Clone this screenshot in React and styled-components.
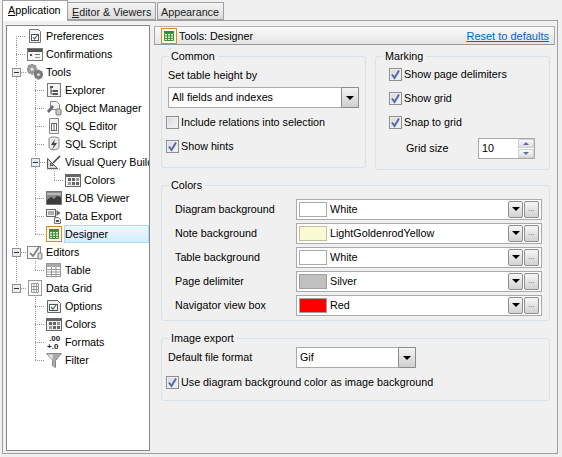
import React from 'react';
import styled, { createGlobalStyle } from 'styled-components';

const Global = createGlobalStyle`
  html, body { margin: 0; padding: 0; background: #f0f0f0; }
  body { font: 10.75px/13px "Liberation Sans", "Noto Sans", sans-serif; color: #000; }
  * { box-sizing: border-box; }
`;

const Window = styled.div`
  width: 562px; height: 457px; background: #f0f0f0; display: flex; flex-direction: column; overflow: hidden;
`;
const TabBar = styled.div`
  height: 20px; display: flex; align-items: flex-end; padding-left: 2px; position: relative; z-index: 1;
`;
const Tab = styled.div`
  height: ${p => (p.$active ? 21 : 18)}px;
  margin-bottom: ${p => (p.$active ? -1 : 0)}px;
  margin-right: ${p => (p.$gap ? 1 : 0)}px;
  width: ${p => p.$w}px;
  border: 1px solid #a0a0a0;
  border-left-width: ${p => (p.$noLeft ? 0 : 1)}px;
  border-bottom: ${p => (p.$active ? 'none' : '1px solid #a0a0a0')};
  background: ${p => (p.$active ? '#fff' : 'linear-gradient(#f4f4f4, #dcdcdc)')};
  padding-left: ${p => p.$pl}px;
  padding-top: 3px;
  white-space: nowrap;
  color: ${p => (p.$active ? '#000' : '#222')};
`;
const Body = styled.div`
  margin: 0 4px 3px 2px; flex: 1; border: 1px solid #a0a0a0; background: #f0f0f0;
  display: grid; grid-template-columns: 144px 1fr; column-gap: 4px; padding: 4px 3px 2px 3px;
`;
const Tree = styled.div`
  border: 1px solid #828790; background: #fff; overflow: hidden; padding-top: 1px;
`;
const TreeRow = styled.div`
  height: 18px; display: flex; align-items: center; white-space: nowrap; overflow: hidden;
`;
const GuideBox = styled.svg`
  width: 19px; height: 18px; flex: none; display: block;
`;
const IconSlot = styled.span`
  width: 16px; height: 16px; margin-left: 1px; flex: none; display: block;
  svg { display: block; }
`;
const Label = styled.span`
  margin-left: 3px;
  color: #000;
  ${p => p.$sel && `
    margin-left: 2px; height: 18px; line-height: 16px; flex: 1;
    border: 1px solid #a9dcf7; background: linear-gradient(#f0f9fe, #d3edfb);
  `}
`;

const Right = styled.div`
  display: flex; flex-direction: column; padding-top: 1px;
`;
const Header = styled.div`
  height: 19px; border: 1px solid #a8a8a8; border-color: #b4b4b4 #a8a8a8 #999 #a8a8a8;
  background: linear-gradient(#fbfbfb, #e4e4e4);
  display: flex; align-items: center; padding: 1px 5px 0 5px; gap: 2px;
`;
const ResetLink = styled.a`
  margin-left: auto; color: #0066cc; text-decoration: underline; font-size: 11px;
`;
const Content = styled.div`
  padding: 5px 5px 0 7px; display: flex; flex-direction: column;
`;
const TopGrid = styled.div`
  display: grid; grid-template-columns: 205px 175px; column-gap: 9px; align-items: start;
`;
const Group = styled.fieldset`
  margin: ${p => p.$mt || 0}px 0 0 0; min-width: 0;
  height: ${p => p.$h}px;
  border: 1px solid #d8e2ea; border-radius: 3px;
  padding: ${p => p.$pad};
`;
const Legend = styled.legend`
  margin-left: ${p => p.$ml ?? 1}px; padding: 0 3px 0 2px; line-height: 13px;
`;
const FieldLabel = styled.div`
  height: 13px; line-height: 13px;
`;
const ComboBox = styled.div`
  width: ${p => p.$w}px; height: 21px; border: 1px solid #a9a9a9; background: #fff; border-right: none;
  display: flex; align-items: center; padding-left: 3px; margin-top: ${p => p.$mt || 0}px;
`;
const ComboText = styled.span`flex: 1;`;
const ComboButton = styled.div`
  width: 18px; height: 21px; margin: -1px 0; flex: none; border: 1px solid #8c8c8c; border-radius: 1px;
  background: linear-gradient(#f4f4f4, #cfcfcf); display: flex; align-items: center; justify-content: center;
`;
const Arrow = styled.i`
  display: block; width: 0; height: 0; border: 4px solid transparent; border-top: 4px solid #000; border-bottom: 0;
`;
const CheckRow = styled.div`
  display: flex; align-items: center; gap: 2px; height: 13px;
  margin-top: ${p => p.$mt || 0}px; margin-left: ${p => p.$ml || 0}px;
`;
const CheckBox = styled.span`
  width: 13px; height: 13px; flex: none; border: 1px solid #8e8f8f; display: block;
  background: linear-gradient(135deg, #d8d8dc, #f6f6f8);
  box-shadow: inset 0 0 0 1px #eee;
  svg { display: block; }
`;
const GridSizeRow = styled.div`
  display: flex; align-items: center; margin: 9px 0 0 17px; height: 21px;
`;
const GridLabel = styled.span`width: 72px;`;
const Spin = styled.div`
  width: 57px; height: 21px; border: 1px solid #a9a9a9; background: #fff; display: flex; align-items: center; padding-left: 3px; justify-content: space-between;
`;
const SpinButtons = styled.div`
  width: 16px; height: 19px; display: flex; flex-direction: column; gap: 1px;
`;
const SpinBtn = styled.div`
  flex: 1; border: 1px solid #d0d0d0; background: linear-gradient(#fafafa, #dcdcdc);
  display: flex; align-items: center; justify-content: center;
`;
const SpinArrow = styled.i`
  display: block; width: 0; height: 0; border-left: 3px solid transparent; border-right: 3px solid transparent;
  ${p => (p.$up ? 'border-bottom: 3px solid #5a6f9c;' : 'border-top: 3px solid #5a6f9c;')}
`;
const ColorRow = styled.div`
  display: grid; grid-template-columns: 121px 1fr; align-items: center; height: 24px; padding-left: 7px;
`;
const ColorBox = styled.div`
  height: 21px; border: 1px solid #a9a9a9; background: #fff; display: flex; align-items: center; padding: 0 2px;
`;
const Swatch = styled.span`
  width: 28px; height: 15px; border: 1px solid ${p => p.$b}; background: ${p => p.$c}; flex: none; margin-right: 3px;
`;
const SmallButton = styled.span`
  width: 15px; height: 17px; border: 1px solid #8e8e8e; border-radius: 2px; margin-left: ${p => p.$ml || 0}px;
  background: linear-gradient(#f6f6f6, #d2d2d2); display: flex; align-items: center; justify-content: center; flex: none;
  font-size: 8px; line-height: 8px; color: #555;
`;
const Grow = styled.span`flex: 1;`;
const ExportRow = styled.div`
  display: grid; grid-template-columns: 128px 120px; align-items: center;
`;

const Check = ({ on }) => (
  <CheckBox>
    {on && (
      <svg width="11" height="11" viewBox="0 0 11 11">
        <path d="M2 5.5 L4.5 9 L9 1.5" fill="none" stroke="#5468b0" strokeWidth="2" />
      </svg>
    )}
  </CheckBox>
);

const S = ({ children }) => <svg width="16" height="16" viewBox="0 0 16 16">{children}</svg>;
const gear = 'M4 0h2l.4 1.6 1.5-.8 1.4 1.4-.8 1.5L10 4.2v2l-1.6.4.8 1.5-1.4 1.4-1.5-.8L6 10.3H4l-.4-1.6-1.5.8L.7 8.1l.8-1.5L0 6.2v-2l1.5-.5-.8-1.5L2.1.8l1.5.8z';
const icons = {
  prefs: <S><path d="M2.5 1.5h9l2 2v11h-11z" fill="#f5f5f5" stroke="#777"/><rect x="4.5" y="6.5" width="7" height="6" fill="#fff" stroke="#555"/><path d="M6 9l1.5 2 3-4" fill="none" stroke="#466" strokeWidth="1.2"/></S>,
  confirm: <S><rect x="0.5" y="2.5" width="15" height="12" fill="#f5f5f5" stroke="#777"/><rect x="1" y="3" width="14" height="3" fill="#555"/><rect x="3" y="8" width="2" height="2" fill="#555"/><rect x="8" y="8" width="5" height="1" fill="#777"/><rect x="8" y="11" width="5" height="1" fill="#999"/></S>,
  tools: <S><path d={gear} fill="#9a9a9a" stroke="#777" strokeWidth="0.5"/><circle cx="5" cy="5.2" r="1.6" fill="#e4e4e4"/><path d={gear} transform="translate(7 6) scale(.9)" fill="#7c7c7c" stroke="#555" strokeWidth="0.5"/><circle cx="11.5" cy="10.7" r="1.4" fill="#ddd"/></S>,
  explorer: <S><rect x="1.5" y="1.5" width="13" height="13" fill="#f3f3f3" stroke="#777"/><path d="M4 4h3v2h-3zM7 8h5v2h-5zM7 11h5v2h-5z" fill="#555"/><path d="M5 6v6h2M5 9h2" fill="none" stroke="#555"/></S>,
  objmgr: <S><path d="M4.5 1.5h6l3 3v5h-9z" fill="#f3f3f3" stroke="#888"/><path d="M1 11l5-6 2 2-5 6z" fill="#667" /><rect x="10" y="9" width="5" height="6" rx="1" fill="#ccc" stroke="#777"/></S>,
  sqled: <S><path d="M3.5 0.5h9v15h-9z" fill="#f4f4f4" stroke="#888"/><rect x="5.5" y="5.5" width="5" height="7" fill="#fff" stroke="#666"/><path d="M8 5v8" stroke="#666"/></S>,
  sqlscr: <S><path d="M3 2.5c0-2 9-2 10 0v9c-1 3-9 3-10 0z" fill="#e8e8e8" stroke="#888"/><path d="M9 3L5 9h3l-2 5 5-7H8z" fill="#444"/></S>,
  vqb: <S><path d="M1.5 14.5V4.5l10 10z" fill="#d8d8d8" stroke="#555"/><path d="M4.5 11.5V9l2.5 2.5z" fill="#fff" stroke="#555"/><path d="M7 9L14 2" stroke="#445" strokeWidth="1.6"/><path d="M1 15h14" stroke="#888" strokeDasharray="1 1"/></S>,
  colors: <S><rect x="0.5" y="2.5" width="15" height="12" fill="#f0f0f0" stroke="#666"/><rect x="1" y="3" width="14" height="2" fill="#666"/><g fill="#666"><rect x="3" y="6" width="3" height="3"/><rect x="7" y="6" width="3" height="3"/><rect x="11" y="6" width="3" height="3" fill="#999"/><rect x="3" y="10" width="3" height="3" fill="#999"/><rect x="7" y="10" width="3" height="3"/><rect x="11" y="10" width="3" height="3"/></g></S>,
  blob: <S><rect x="0.5" y="1.5" width="15" height="13" fill="#8a8a8a" stroke="#777"/><path d="M1 10l4-3 3 2 3-3 4 1v7H1z" fill="#3c3c3c"/><path d="M1 3h14v2H1z" fill="#bbb"/></S>,
  dataexp: <S><rect x="0.5" y="1.5" width="9" height="7" fill="#f4f4f4" stroke="#666"/><path d="M2 4h6M2 6h6" stroke="#666"/><path d="M10.5 2l4 3-4 3z" fill="#666"/><path d="M8.5 9.5h4l2 2v4h-6z" fill="#eee" stroke="#777"/><rect x="10" y="12" width="3" height="2" fill="#555"/></S>,
  designer: <S><rect x="0.5" y="0.5" width="15" height="15" fill="#fdf8e8" stroke="#d08a38"/><rect x="3" y="3" width="10" height="2" fill="#2f8f3a"/><path d="M3.5 5.5h9v7h-9zM3.5 8h9M3.5 10.5h9M6.5 5.5v7M9.5 5.5v7" fill="#dff0c8" stroke="#3a9440"/></S>,
  editors: <S><rect x="0.5" y="2.5" width="13" height="12" fill="#f5f5f5" stroke="#888"/><path d="M3 9l3 3 6-9" fill="none" stroke="#777" strokeWidth="1.6"/><rect x="11" y="9" width="4" height="6" rx="1" fill="#ddd" stroke="#777"/></S>,
  table: <S><rect x="0.5" y="1.5" width="14" height="13" fill="#fff" stroke="#999"/><rect x="1" y="2" width="13" height="3" fill="#aaa"/><path d="M1 7.5h13M1 10h13M1 12.5h13M5.5 5v9M10 5v9" stroke="#999"/></S>,
  grid: <S><rect x="1.5" y="0.5" width="13" height="15" fill="#fff" stroke="#999"/><path d="M4.5 3.5h7v9h-7zM4.5 6.5h7M4.5 9.5h7M7 3.5v9M9.5 3.5v9" fill="none" stroke="#999"/></S>,
  options: <S><path d="M1.5 2.5h10l3 3v9h-13z" fill="#f0f0f0" stroke="#666"/><rect x="3.5" y="6.5" width="8" height="6" fill="#fff" stroke="#555"/><path d="M5 9l2 2 3-4" fill="none" stroke="#466" strokeWidth="1.2"/></S>,
  formats: <S><text x="3" y="6.5" fontSize="8" fontFamily="Liberation Sans" fontWeight="700" fill="#222">.00</text><text x="1" y="15" fontSize="8" fontFamily="Liberation Sans" fontWeight="700" fill="#222">+.0</text></S>,
  filter: <S><path d="M0.5 1.5h15l-6 7v7l-3-2v-5z" fill="#aaa" stroke="#888"/><path d="M6 8.5L2 2.5h5z" fill="#e2e2e2"/></S>,
};

const Guide = ({ kind }) => (
  <GuideBox viewBox="0 0 19 18">
    {kind === 'pipe' && <path d="M9.5 0V18" stroke="#999" strokeDasharray="1 1" />}
    {kind === 'first' && <path d="M9.5 9V18M9 9.5H19" stroke="#999" strokeDasharray="1 1" />}
    {kind === 'tee' && <path d="M9.5 0V18M9 9.5H19" stroke="#999" strokeDasharray="1 1" />}
    {kind === 'end' && <path d="M9.5 0V9M9 9.5H19" stroke="#999" strokeDasharray="1 1" />}
    {(kind === 'open' || kind === 'openEnd') && (
      <>
        <path d={kind === 'open' ? 'M9.5 0V4M9.5 14V18M14 9.5H19' : 'M9.5 0V4M14 9.5H19'} stroke="#999" strokeDasharray="1 1" />
        <rect x="5.5" y="5.5" width="8" height="8" fill="#e8edf2" stroke="#919191" />
        <path d="M7 9.5h5" stroke="#333" />
      </>
    )}
  </GuideBox>
);

const rows = [
  [['first'], 'prefs', 'Preferences'],
  [['tee'], 'confirm', 'Confirmations'],
  [['open'], 'tools', 'Tools'],
  [['pipe', 'tee'], 'explorer', 'Explorer'],
  [['pipe', 'tee'], 'objmgr', 'Object Manager'],
  [['pipe', 'tee'], 'sqled', 'SQL Editor'],
  [['pipe', 'tee'], 'sqlscr', 'SQL Script'],
  [['pipe', 'open'], 'vqb', 'Visual Query Builder'],
  [['pipe', 'pipe', 'end'], 'colors', 'Colors'],
  [['pipe', 'tee'], 'blob', 'BLOB Viewer'],
  [['pipe', 'tee'], 'dataexp', 'Data Export'],
  [['pipe', 'end'], 'designer', 'Designer', true],
  [['open'], 'editors', 'Editors'],
  [['pipe', 'end'], 'table', 'Table'],
  [['openEnd'], 'grid', 'Data Grid'],
  [['none', 'tee'], 'options', 'Options'],
  [['none', 'tee'], 'colors', 'Colors'],
  [['none', 'tee'], 'formats', 'Formats'],
  [['none', 'end'], 'filter', 'Filter'],
];

const colorRows = [
  ['Diagram background', '#fff', '#a9a9a9', 'White'],
  ['Note background', '#fafad2', '#c0c0a0', 'LightGoldenrodYellow'],
  ['Table background', '#fff', '#a9a9a9', 'White'],
  ['Page delimiter', '#c0c0c0', '#a0a0a0', 'Silver'],
  ['Navigator view box', '#f00', '#a0a0a0', 'Red'],
];

export default function App() {
  return (
    <Window>
      <Global />
      <TabBar>
        <Tab $active $w={66} $pl={5}><u>A</u>pplication</Tab>
        <Tab $noLeft $gap $w={88} $pl={4}><u>E</u>ditor &amp; Viewers</Tab>
        <Tab $w={67} $pl={3}>Appearance</Tab>
      </TabBar>
      <Body>
        <Tree>
          {rows.map(([g, ic, text, sel], i) => (
            <TreeRow key={i}>
              {g.map((k, j) => <Guide key={j} kind={k} />)}
              <IconSlot>{icons[ic]}</IconSlot>
              <Label $sel={sel}>{text}</Label>
            </TreeRow>
          ))}
        </Tree>
        <Right>
          <Header>
            <IconSlot>{icons.designer}</IconSlot>
            <span>Tools: Designer</span>
            <ResetLink>Reset to defaults</ResetLink>
          </Header>
          <Content>
            <TopGrid>
              <Group $h={118} $pad="6px 7px 0 6px">
                <Legend>Common</Legend>
                <FieldLabel>Set table height by</FieldLabel>
                <ComboBox $w={191} $mt={5}><ComboText>All fields and indexes</ComboText><ComboButton><Arrow /></ComboButton></ComboBox>
                <CheckRow $mt={8} $ml={-2}><Check /><span>Include relations into selection</span></CheckRow>
                <CheckRow $mt={11} $ml={-2}><Check on /><span>Show hints</span></CheckRow>
              </Group>
              <Group $h={120} $pad="5px 6px 0 13px">
                <Legend $ml={-6}>Marking</Legend>
                <CheckRow><Check on /><span>Show page delimiters</span></CheckRow>
                <CheckRow $mt={11}><Check on /><span>Show grid</span></CheckRow>
                <CheckRow $mt={11}><Check on /><span>Snap to grid</span></CheckRow>
                <GridSizeRow>
                  <GridLabel>Grid size</GridLabel>
                  <Spin>
                    <span>10</span>
                    <SpinButtons>
                      <SpinBtn><SpinArrow $up /></SpinBtn>
                      <SpinBtn><SpinArrow /></SpinBtn>
                    </SpinButtons>
                  </Spin>
                </GridSizeRow>
              </Group>
            </TopGrid>
            <Group $mt={9} $h={142} $pad="5px 7px 0 6px">
              <Legend>Colors</Legend>
              {colorRows.map(([l, c, b, n]) => (
                <ColorRow key={l}>
                  <span>{l}</span>
                  <ColorBox>
                    <Swatch $c={c} $b={b} />
                    <span>{n}</span>
                    <Grow />
                    <SmallButton><Arrow /></SmallButton>
                    <SmallButton $ml={1}>...</SmallButton>
                  </ColorBox>
                </ColorRow>
              ))}
            </Group>
            <Group $mt={11} $h={69} $pad="2px 6px 0 6px">
              <Legend>Image export</Legend>
              <ExportRow>
                <span>Default file format</span>
                <ComboBox $w={120}><ComboText>Gif</ComboText><ComboButton><Arrow /></ComboButton></ComboBox>
              </ExportRow>
              <CheckRow $mt={8} $ml={-2}><Check on /><span>Use diagram background color as image background</span></CheckRow>
            </Group>
          </Content>
        </Right>
      </Body>
    </Window>
  );
}
